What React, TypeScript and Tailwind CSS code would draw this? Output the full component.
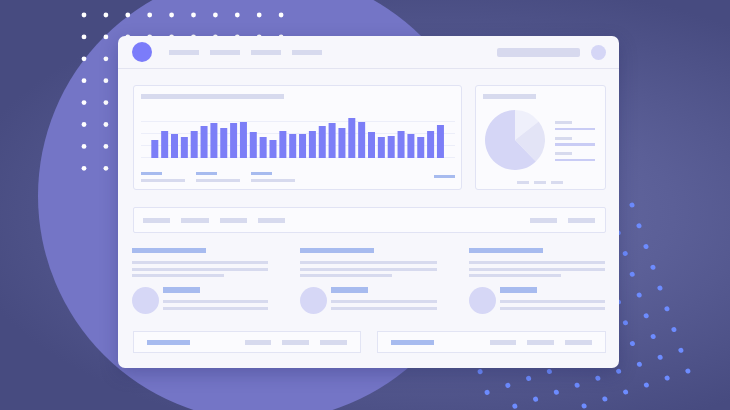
import React from "react";

const bars = [18, 27, 24, 21, 27, 32, 35, 30, 35, 36, 26, 21, 18, 27, 24, 24, 27, 32, 35, 30, 40, 36, 26, 21, 22, 27, 24, 21, 27, 33];

const gray = "bg-[#d7daee]";
const blue = "bg-[#a7bbef]";

function Backdrop() {
  const white = [];
  for (let r = 0; r < 8; r++)
    for (let c = 0; c < 10; c++)
      white.push(<circle key={`w${r}-${c}`} cx={84 + c * 21.9} cy={15 + r * 21.9} r={2.4} fill="#ffffff" />);
  const dots = [];
  for (let i = 0; i < 9; i++)
    for (let j = 0; j < 10; j++)
      dots.push(<circle key={`b${i}-${j}`} cx={-j * 21.9} cy={i * 21.9} r={2.5} fill="#6d8cff" />);
  return (
    <svg className="absolute inset-0" width={730} height={410} viewBox="0 0 730 410">
      <circle cx={263} cy={196} r={225} fill="#7475c6" />
      {white}
      <g transform="translate(632 205) rotate(-18.6)">{dots}</g>
    </svg>
  );
}

function BarChart() {
  return (
    <svg width={314} height={43} viewBox="0 0 314 43" className="block">
      {[5, 17, 29, 41].map((y) => (
        <line key={y} x1={0} x2={314} y1={y + 0.5} y2={y + 0.5} stroke="#eceef9" strokeWidth={1} />
      ))}
      {bars.map((h, i) => (
        <rect key={i} x={10.3 + i * 9.85} y={42 - h} width={7} height={h} fill="#7c7ef7" />
      ))}
    </svg>
  );
}

function Pie() {
  return (
    <svg width={60} height={60} viewBox="0 0 60 60" className="block shrink-0">
      <path d="M30 30 L30 0 A30 30 0 0 1 53.64 11.52 Z" fill="#eff0fb" />
      <path d="M30 30 L53.64 11.52 A30 30 0 0 1 50.84 51.58 Z" fill="#e3e4f6" />
      <path d="M30 30 L50.84 51.58 A30 30 0 1 1 30 0 Z" fill="#d5d6f6" />
    </svg>
  );
}

function Column() {
  return (
    <div className="flex flex-col">
      <div className={`w-[74px] h-[5px] ${blue}`} />
      <div className="mt-[8px] flex flex-col gap-[3.5px]">
        <div className={`w-full h-[3px] ${gray}`} />
        <div className={`w-full h-[3px] ${gray}`} />
        <div className={`w-[92px] h-[3px] ${gray}`} />
      </div>
      <div className="mt-[10px] flex gap-[4px]">
        <div className="w-[27px] h-[27px] rounded-full bg-[#d6d7f6] shrink-0" />
        <div className="flex-1 flex flex-col">
          <div className={`w-[37px] h-[6px] ${blue}`} />
          <div className={`mt-[7px] w-full h-[3px] ${gray}`} />
          <div className={`mt-[4px] w-full h-[3px] ${gray}`} />
        </div>
      </div>
    </div>
  );
}

function FooterBox({ w }: { w: string }) {
  return (
    <div className={`${w} h-[22px] border border-[#e2e4f4] bg-[#fbfbfe] flex items-center pl-[13px] pr-[13px]`}>
      <div className={`w-[43px] h-[5px] ${blue}`} />
      <div className="ml-auto flex gap-[11px]">
        <div className={`w-[26px] h-[5px] ${gray}`} />
        <div className={`w-[27px] h-[5px] ${gray}`} />
        <div className={`w-[27px] h-[5px] ${gray}`} />
      </div>
    </div>
  );
}

export default function App() {
  return (
    <div className="relative w-[730px] h-[410px] overflow-hidden bg-[radial-gradient(ellipse_at_60%_52%,#6b6fa8_0%,#5b5f97_38%,#474b80_78%)]">
      <Backdrop />
      <div className="relative pl-[118px] pt-[36px]">
        <div className="w-[501px] h-[332px] rounded-[7px] bg-[#f7f7fc] shadow-[0_6px_18px_rgba(30,32,90,0.28)] flex flex-col">
          {/* top bar */}
          <div className="h-[33px] border-b border-[#e3e4f1] flex items-center pl-[14px] pr-[13px]">
            <div className="w-[20px] h-[20px] rounded-full bg-[#7b7cfa]" />
            <div className="ml-[17px] flex gap-[11px]">
              <div className={`w-[30px] h-[5px] ${gray}`} />
              <div className={`w-[30px] h-[5px] ${gray}`} />
              <div className={`w-[30px] h-[5px] ${gray}`} />
              <div className={`w-[30px] h-[5px] ${gray}`} />
            </div>
            <div className="ml-auto w-[83px] h-[9px] rounded-[2px] bg-[#d7d9ee]" />
            <div className="ml-[11px] w-[15px] h-[15px] rounded-full bg-[#d5d6f6]" />
          </div>

          <div className="flex flex-col pl-[15px] pr-[13px] pt-[16px]">
            {/* charts */}
            <div className="flex gap-[13px] h-[105px]">
              <div className="w-[329px] border border-[#e1e3f4] rounded-[3px] bg-[#fbfbfe] flex flex-col pl-[7px] pr-[6px] pt-[8px]">
                <div className={`w-[143px] h-[5px] ${gray}`} />
                <div className="mt-[17px]">
                  <BarChart />
                </div>
                <div className="mt-[13px] flex">
                  <div className="flex gap-[11px]">
                    {[0, 1, 2].map((k) => (
                      <div key={k} className="flex flex-col gap-[4px]">
                        <div className={`w-[21px] h-[3px] ${blue}`} />
                        <div className={`w-[44px] h-[3px] ${gray}`} />
                      </div>
                    ))}
                  </div>
                  <div className={`ml-auto mt-[3px] w-[21px] h-[3px] ${blue}`} />
                </div>
              </div>

              <div className="w-[131px] border border-[#e1e3f4] rounded-[3px] bg-[#fbfbfe] flex flex-col pl-[9px] pt-[8px]">
                <div className={`-ml-[2px] w-[53px] h-[5px] ${gray}`} />
                <div className="mt-[11px] flex">
                  <Pie />
                  <div className="ml-[10px] mt-[11px] flex flex-col gap-[6.5px]">
                    {[0, 1, 2].map((k) => (
                      <div key={k} className="flex flex-col gap-[3.5px]">
                        <div className={`w-[17px] h-[3px] ${gray}`} />
                        <div className="w-[40px] h-[2.5px] bg-[#c9ccf5]" />
                      </div>
                    ))}
                  </div>
                </div>
                <div className="mt-[11px] ml-[32px] flex gap-[5px]">
                  <div className="w-[12px] h-[2.5px] bg-[#d8dbef]" />
                  <div className="w-[12px] h-[2.5px] bg-[#d8dbef]" />
                  <div className="w-[12px] h-[2.5px] bg-[#d8dbef]" />
                </div>
              </div>
            </div>

            {/* filter bar */}
            <div className="mt-[17px] h-[26px] border border-[#e1e3f4] rounded-[2px] bg-[#fbfbfe] flex items-center pl-[9px] pr-[10px]">
              <div className="flex gap-[11px]">
                <div className={`w-[27px] h-[5px] ${gray}`} />
                <div className={`w-[28px] h-[5px] ${gray}`} />
                <div className={`w-[27px] h-[5px] ${gray}`} />
                <div className={`w-[27px] h-[5px] ${gray}`} />
              </div>
              <div className="ml-auto flex gap-[11px]">
                <div className={`w-[27px] h-[5px] ${gray}`} />
                <div className={`w-[27px] h-[5px] ${gray}`} />
              </div>
            </div>

            {/* three columns */}
            <div className="mt-[15px] -ml-px flex gap-[32px]">
              <div className="w-[136px]"><Column /></div>
              <div className="w-[137px]"><Column /></div>
              <div className="w-[136px]"><Column /></div>
            </div>

            {/* footer boxes */}
            <div className="mt-[17px] flex gap-[16px]">
              <FooterBox w="w-[228px]" />
              <FooterBox w="w-[229px]" />
            </div>
          </div>
        </div>
      </div>
    </div>
  );
}
